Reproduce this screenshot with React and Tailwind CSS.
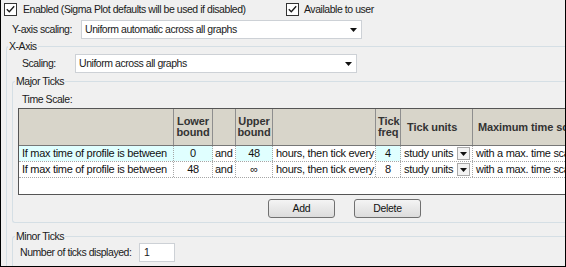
import React from "react";

const cols = [155, 39, 23, 37, 103, 25, 72, 220];

const CheckBox = () => (
  <span className="w-[13px] h-[13px] border border-[#333] bg-white flex items-center justify-center shrink-0">
    <svg width="11" height="11" viewBox="0 0 11 11">
      <path d="M1.8 5.2 L4.3 7.8 L9.2 2.2" stroke="#1a1a1a" strokeWidth="1.3" fill="none" />
    </svg>
  </span>
);

const Arrow = () => (
  <svg width="7" height="4" viewBox="0 0 7 4">
    <path d="M0 0 H7 L3.5 4 Z" fill="#111" />
  </svg>
);

const ComboBox = ({ width, text }) => (
  <div
    className="h-[19px] border border-[#cdd1d6] bg-white flex items-center justify-between pl-[3px] pr-[4px] shrink-0"
    style={{ width }}
  >
    <span>{text}</span>
    <Arrow />
  </div>
);

const HeaderCell = ({ w, children, className = "" }) => (
  <div
    className={`h-full border-r border-[#8e8e8e] flex items-center shrink-0 ${className}`}
    style={{ width: w }}
  >
    {children}
  </div>
);

const Cell = ({ w, children, cyan, className = "" }) => (
  <div
    className={`h-full border-r border-dotted border-[#a6a6a6] flex items-center shrink-0 overflow-hidden ${cyan ? "bg-[#e0ffff]" : "bg-white"} ${className}`}
    style={{ width: w }}
  >
    {children}
  </div>
);

const UnitsCell = ({ w }) => (
  <Cell w={w} className="justify-between pl-[3px] pr-[2px]">
    <span>study units</span>
    <span className="w-[13px] h-[13px] border border-[#a9a9a9] bg-[#f3f3f3] flex items-center justify-center">
      <Arrow />
    </span>
  </Cell>
);

const rows = [
  { lo: "0", hi: "48", freq: "4", cyan: true },
  { lo: "48", hi: "∞", freq: "8", cyan: false },
];

const TimeTable = () => (
  <div className="ml-[5px] mt-[2px] h-[87px] border-l border-t border-b border-[#555] bg-white overflow-hidden text-[11px] tracking-[-0.3px] text-[#111]">
    <div className="flex h-[37px] border-b border-[#777] bg-[#d8d5ca] font-bold text-[#333] leading-[11px] tracking-[-0.1px]">
      <HeaderCell w={cols[0]} />
      <HeaderCell w={cols[1]} className="justify-center text-center">
        Lower<br />bound
      </HeaderCell>
      <HeaderCell w={cols[2]} />
      <HeaderCell w={cols[3]} className="justify-center text-center">
        Upper<br />bound
      </HeaderCell>
      <HeaderCell w={cols[4]} />
      <HeaderCell w={cols[5]} className="pl-[2px]">
        Tick<br />freq
      </HeaderCell>
      <HeaderCell w={cols[6]} className="pl-[6px]">Tick units</HeaderCell>
      <HeaderCell w={cols[7]} className="pl-[5px] whitespace-nowrap">Maximum time scale</HeaderCell>
    </div>
    {rows.map((r) => (
      <div key={r.lo} className="flex h-[16px] border-b border-dotted border-[#a6a6a6] whitespace-nowrap">
        <Cell w={cols[0]} cyan={r.cyan} className="pl-[3px]">If max time of profile is between</Cell>
        <Cell w={cols[1]} cyan={r.cyan} className="justify-center">{r.lo}</Cell>
        <Cell w={cols[2]} className="pl-[2px]">and</Cell>
        <Cell w={cols[3]} cyan={r.cyan} className="justify-center">{r.hi}</Cell>
        <Cell w={cols[4]} className="pl-[3px]">hours, then tick every</Cell>
        <Cell w={cols[5]} cyan={r.cyan} className="justify-center">{r.freq}</Cell>
        <UnitsCell w={cols[6]} />
        <Cell w={cols[7]} className="pl-[3px]">with a max. time scale of</Cell>
      </div>
    ))}
  </div>
);

const Button = ({ children }) => (
  <button className="w-[67px] h-[19px] border border-[#707070] rounded-[3px] bg-gradient-to-b from-[#f4f4f4] to-[#dcdcdc] text-[10.5px] tracking-[-0.3px] text-[#111] flex items-center justify-center">
    {children}
  </button>
);

export default function App() {
  return (
    <div className="w-[566px] h-[267px] bg-[#f0f0f0] border-l border-r border-b border-black overflow-hidden font-['Liberation_Sans',Arial,sans-serif] text-[10.5px] tracking-[-0.45px] text-[#1a1a1a] leading-[13px]">
      <div className="flex items-center pt-[3px] h-[16px]">
        <div className="w-[285px] flex items-center pl-[3px] shrink-0">
          <CheckBox />
          <span className="ml-[6px]">Enabled (Sigma Plot defaults will be used if disabled)</span>
        </div>
        <CheckBox />
        <span className="ml-[5px]">Available to user</span>
      </div>

      <div className="flex items-center mt-[4px] ml-[11px]">
        <span className="w-[69px] shrink-0">Y-axis scaling:</span>
        <ComboBox width={281} text="Uniform automatic across all graphs" />
      </div>

      <fieldset className="ml-[5px] mt-[1px] border border-r-0 border-[#d5dfe5] rounded-l-[3px] min-w-0 h-[260px]">
        <legend className="ml-[1px] px-[1px] leading-[13px]">X-Axis</legend>

        <div className="flex items-center mt-[1px] ml-[15px]">
          <span className="w-[53px] shrink-0">Scaling:</span>
          <ComboBox width={282} text="Uniform across all graphs" />
        </div>

        <fieldset className="ml-[5px] mt-[2px] border border-r-0 border-[#d5dfe5] rounded-l-[3px] min-w-0 pb-[4px]">
          <legend className="ml-[2px] px-[1px] leading-[13px]">Major Ticks</legend>
          <div className="mt-[5px] ml-[9px] h-[13px]">Time Scale:</div>
          <TimeTable />
          <div className="flex mt-[4px] ml-[255px] gap-[19px]">
            <Button>Add</Button>
            <Button>Delete</Button>
          </div>
        </fieldset>

        <fieldset className="ml-[5px] mt-[7px] border border-r-0 border-[#d5dfe5] rounded-l-[3px] min-w-0 pb-[12px]">
          <legend className="ml-[2px] px-[1px] leading-[13px]">Minor Ticks</legend>
          <div className="flex items-center ml-[7px]">
            <span className="w-[119px] shrink-0">Number of ticks displayed:</span>
            <div className="w-[36px] h-[19px] border border-[#cdd1d6] bg-white flex items-center pl-[4px]">1</div>
          </div>
        </fieldset>
      </fieldset>
    </div>
  );
}
